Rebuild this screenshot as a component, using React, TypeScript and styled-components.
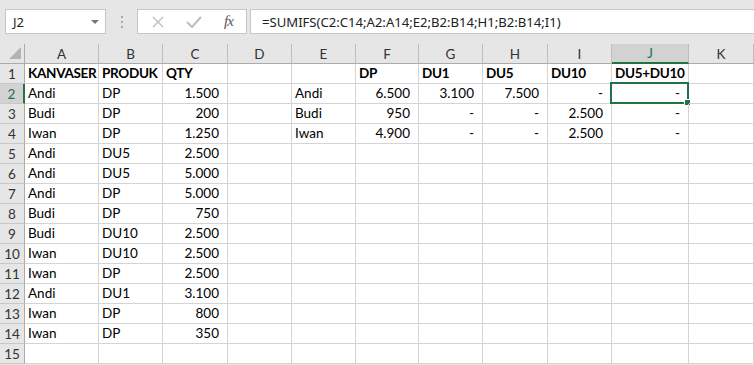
import React from "react";
import styled, { createGlobalStyle } from "styled-components";

const GlobalStyle = createGlobalStyle`
  body {
    margin: 0;
    background: #ffffff;
    font-family: "Lato", "Liberation Sans", sans-serif;
  }
`;

const columns = [
  { name: "A", width: 74 },
  { name: "B", width: 64 },
  { name: "C", width: 65 },
  { name: "D", width: 64 },
  { name: "E", width: 64 },
  { name: "F", width: 63 },
  { name: "G", width: 64 },
  { name: "H", width: 65 },
  { name: "I", width: 64 },
  { name: "J", width: 77 },
  { name: "K", width: 65 },
];

const rows: string[][] = [
  ["KANVASER", "PRODUK", "QTY", "", "", "DP", "DU1", "DU5", "DU10", "DU5+DU10", ""],
  ["Andi", "DP", "1.500", "", "Andi", "6.500", "3.100", "7.500", "-", "-", ""],
  ["Budi", "DP", "200", "", "Budi", "950", "-", "-", "2.500", "-", ""],
  ["Iwan", "DP", "1.250", "", "Iwan", "4.900", "-", "-", "2.500", "-", ""],
  ["Andi", "DU5", "2.500"],
  ["Andi", "DU5", "5.000"],
  ["Andi", "DP", "5.000"],
  ["Budi", "DP", "750"],
  ["Budi", "DU10", "2.500"],
  ["Iwan", "DU10", "2.500"],
  ["Iwan", "DP", "2.500"],
  ["Andi", "DU1", "3.100"],
  ["Iwan", "DP", "800"],
  ["Iwan", "DP", "350"],
  [],
];

const SELECTED_COL = 9;
const SELECTED_ROW = 1;

const Window = styled.div`
  width: 754px;
  height: 365px;
  overflow: hidden;
  background: #e6e6e6;
`;

const FormulaBar = styled.div`
  height: 44px;
  display: flex;
  align-items: flex-start;
  padding: 9px 0 0 5px;
  box-sizing: border-box;
`;

const NameBox = styled.div`
  width: 101px;
  height: 25px;
  box-sizing: border-box;
  background: #fff;
  border: 1px solid #c6c6c6;
  display: flex;
  align-items: center;
  justify-content: space-between;
  padding: 0 6px 0 7px;
  font-family: "Noto Sans", "Liberation Sans", sans-serif;
  font-size: 13px;
  color: #222;
`;

const DropArrow = styled.span`
  width: 0;
  height: 0;
  border-left: 4px solid transparent;
  border-right: 4px solid transparent;
  border-top: 4px solid #777;
`;

const Grip = styled.div`
  width: 31px;
  height: 25px;
  display: flex;
  flex-direction: column;
  align-items: center;
  justify-content: center;
  gap: 3px;

  span {
    width: 2px;
    height: 2px;
    background: #a6a6a6;
  }
`;

const FxBox = styled.div`
  width: 110px;
  height: 25px;
  box-sizing: border-box;
  background: #fff;
  border: 1px solid #c6c6c6;
  display: flex;
  align-items: center;
  padding-left: 14px;
  gap: 22px;
`;

const FxText = styled.span`
  font-family: "Liberation Serif", serif;
  font-style: italic;
  font-size: 15px;
  color: #555;
  letter-spacing: -1px;
`;

const FormulaInput = styled.div`
  flex: 1;
  height: 25px;
  margin-left: 3px;
  box-sizing: border-box;
  background: #fff;
  border: 1px solid #c6c6c6;
  border-right: none;
  display: flex;
  align-items: center;
  padding-left: 11px;
  font-family: "Noto Sans", "Liberation Sans", sans-serif;
  font-size: 13.1px;
  color: #222;
`;

const Sheet = styled.div`
  display: grid;
  grid-template-columns: 25px ${columns.map((c) => `${c.width}px`).join(" ")};
  grid-auto-rows: 20px;
  background: #fff;
`;

const Corner = styled.div`
  background: #e6e6e6;
  border-right: 1px solid #ababab;
  border-bottom: 1px solid #ababab;
  position: relative;

  &::after {
    content: "";
    position: absolute;
    right: 3px;
    bottom: 4px;
    width: 0;
    height: 0;
    border-left: 12px solid transparent;
    border-bottom: 12px solid #b4b4b4;
  }
`;

const ColHeader = styled.div<{ $selected: boolean }>`
  background: ${(p) => (p.$selected ? "#d2d2d2" : "#e6e6e6")};
  border-right: 1px solid #bdbdbd;
  border-bottom: ${(p) => (p.$selected ? "2px solid #217346" : "1px solid #ababab")};
  display: flex;
  align-items: center;
  justify-content: center;
  font-size: 13.5px;
  color: ${(p) => (p.$selected ? "#217346" : "#333")};
  box-sizing: border-box;
`;

const RowHeader = styled.div<{ $selected: boolean }>`
  background: ${(p) => (p.$selected ? "#d2d2d2" : "#e6e6e6")};
  border-right: ${(p) => (p.$selected ? "2px solid #217346" : "1px solid #ababab")};
  border-bottom: 1px solid #c8c8c8;
  display: flex;
  align-items: center;
  justify-content: center;
  font-size: 13.5px;
  color: ${(p) => (p.$selected ? "#217346" : "#333")};
  box-sizing: border-box;
`;

const Cell = styled.div<{ $bold: boolean; $right: boolean }>`
  position: relative;
  border-right: 1px solid #d4d4d4;
  border-bottom: 1px solid #d4d4d4;
  box-sizing: border-box;
  display: flex;
  align-items: flex-end;
  justify-content: ${(p) => (p.$right ? "flex-end" : "flex-start")};
  padding: 0 ${(p) => (p.$right ? "8px" : "0")} 1px ${(p) => (p.$right ? "0" : "3px")};
  font-size: 13.5px;
  line-height: 18px;
  font-weight: ${(p) => (p.$bold ? 700 : 400)};
  letter-spacing: ${(p) => (p.$bold ? "-0.3px" : "0")};
  color: #000;
  white-space: nowrap;
`;

const Selection = styled.div`
  position: absolute;
  left: -2px;
  top: -2px;
  right: -1px;
  bottom: -1px;
  border: 2px solid #217346;
  pointer-events: none;
`;

const FillHandle = styled.div`
  position: absolute;
  right: -4px;
  bottom: -4px;
  width: 5px;
  height: 5px;
  background: #217346;
  border: 1px solid #fff;
`;

const isNumeric = (v: string) => /^[\d.]+$/.test(v) || v === "-";

export default function App() {
  return (
    <>
      <GlobalStyle />
      <Window>
        <FormulaBar>
          <NameBox>
            J2
            <DropArrow />
          </NameBox>
          <Grip>
            <span />
            <span />
            <span />
          </Grip>
          <FxBox>
            <svg width="12" height="12" viewBox="0 0 12 12">
              <path d="M1 1 L11 11 M11 1 L1 11" stroke="#bdbdbd" strokeWidth="1.4" />
            </svg>
            <svg width="16" height="12" viewBox="0 0 16 12">
              <path d="M1 6 L6 11 L15 1" stroke="#bdbdbd" strokeWidth="2" fill="none" />
            </svg>
            <FxText>fx</FxText>
          </FxBox>
          <FormulaInput>=SUMIFS(C2:C14;A2:A14;E2;B2:B14;H1;B2:B14;I1)</FormulaInput>
        </FormulaBar>
        <Sheet>
          <Corner />
          {columns.map((c, i) => (
            <ColHeader key={c.name} $selected={i === SELECTED_COL}>
              {c.name}
            </ColHeader>
          ))}
          {rows.map((row, r) => (
            <React.Fragment key={r}>
              <RowHeader $selected={r === SELECTED_ROW}>{r + 1}</RowHeader>
              {columns.map((c, ci) => {
                const v = row[ci] ?? "";
                const selected = r === SELECTED_ROW && ci === SELECTED_COL;
                return (
                  <Cell key={c.name} $bold={r === 0} $right={r > 0 && isNumeric(v)}>
                    {v}
                    {selected && (
                      <Selection>
                        <FillHandle />
                      </Selection>
                    )}
                  </Cell>
                );
              })}
            </React.Fragment>
          ))}
        </Sheet>
      </Window>
    </>
  );
}
